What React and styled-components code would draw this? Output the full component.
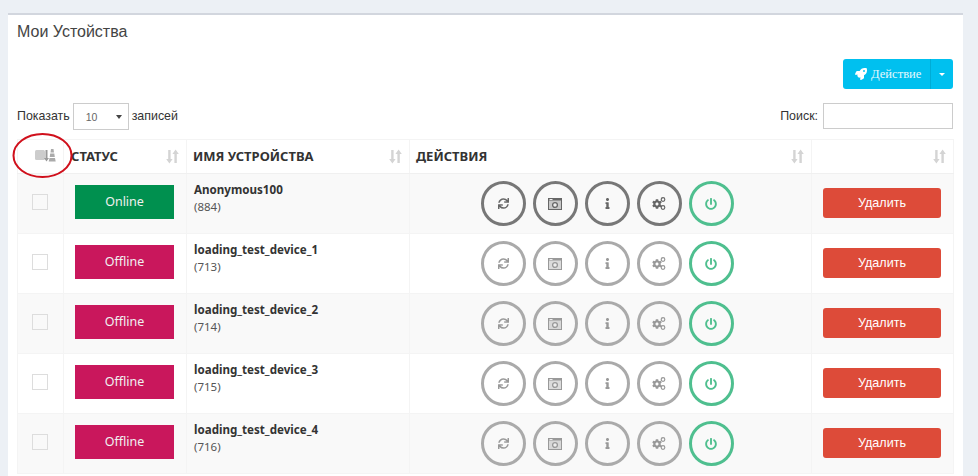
import styled, { createGlobalStyle } from "styled-components";
import { FaSync, FaInfo, FaPowerOff, FaRocket, FaCog } from "react-icons/fa";

const GlobalStyle = createGlobalStyle`
  html, body {
    margin: 0;
    padding: 0;
    height: 476px;
    overflow: hidden;
    background: #ecf0f5;
    font-family: "Liberation Sans", Arial, sans-serif;
  }
`;

const Page = styled.div`
  position: relative;
  height: 476px;
  padding: 13px 15px 0 8px;
  box-sizing: border-box;
`;

const Card = styled.section`
  height: 463px;
  box-sizing: border-box;
  background: #fff;
  border-top: 2px solid #d2d6de;
  padding: 0 10px 0 9px;
  overflow: hidden;
`;

const Title = styled.h3`
  margin: 0;
  padding-top: 7px;
  height: 44px;
  box-sizing: border-box;
  font-size: 16px;
  line-height: 20px;
  font-weight: 400;
  color: #444;
`;

const Toolbar = styled.div`
  display: flex;
  justify-content: flex-end;
  height: 44px;
`;

const ActionGroup = styled.div`
  display: flex;
  height: 30px;
  border-radius: 3px;
  overflow: hidden;
  background: #00c0ef;
  color: #fff;
`;

const ActionMain = styled.button`
  display: flex;
  align-items: center;
  gap: 4px;
  width: 88px;
  padding: 0 0 0 12px;
  border: 0;
  border-right: 1px solid #00acd6;
  background: none;
  color: #e4f8fd;
  font-family: "Liberation Serif", serif;
  font-size: 12.6px;
`;

const ActionCaret = styled.button`
  display: flex;
  align-items: center;
  justify-content: center;
  width: 22px;
  padding: 0;
  border: 0;
  background: none;
  &::after {
    content: "";
    border-left: 3px solid transparent;
    border-right: 3px solid transparent;
    border-top: 3px solid #fff;
  }
`;

const Controls = styled.div`
  display: flex;
  justify-content: space-between;
  height: 36px;
  font-size: 12.4px;
  color: #333;
`;

const ControlGroup = styled.label`
  display: flex;
  align-items: flex-start;
  gap: 3px;
  line-height: 26px;
`;

const FakeSelect = styled.div`
  display: flex;
  align-items: center;
  justify-content: space-between;
  width: 56px;
  height: 27px;
  box-sizing: border-box;
  border: 1px solid #ccc;
  padding: 0 6px 0 12px;
  font-size: 10.5px;
  color: #666;
  &::after {
    content: "";
    border-left: 3px solid transparent;
    border-right: 3px solid transparent;
    border-top: 4px solid #444;
  }
`;

const SearchInput = styled.input`
  width: 130px;
  height: 26px;
  box-sizing: border-box;
  border: 1px solid #ccc;
  margin-left: 2px;
  outline: none;
`;

const Table = styled.table`
  width: 936px;
  table-layout: fixed;
  border-collapse: collapse;
  border: 1px solid #f4f4f4;
`;

const HeadCell = styled.th`
  position: relative;
  height: 34px;
  padding: 0 0 2px ${(p) => p.$pad ?? 6}px;
  box-sizing: border-box;
  border: 1px solid #f4f4f4;
  border-bottom: 1px solid #f0f0f0;
  text-align: left;
  font-family: "Noto Sans", sans-serif;
  font-size: 13px;
  font-weight: 700;
  color: #333;
`;

const SortMark = styled.svg`
  position: absolute;
  right: 7px;
  top: 9px;
  width: 13px;
  height: 15px;
  color: #d4d4d4;
`;

const Row = styled.tr`
  background: ${(p) => (p.$striped ? "#f9f9f9" : "#fff")};
`;

const Cell = styled.td`
  height: 60px;
  padding: 0;
  box-sizing: border-box;
  border: 1px solid #f4f4f4;
  vertical-align: middle;
`;

const Check = styled.span`
  display: block;
  width: 16px;
  height: 16px;
  margin: 0 0 4px 14px;
  box-sizing: border-box;
  border: 1px solid #ddd;
  background: ${(p) => (p.$striped ? "#f9f9f9" : "#fff")};
`;

const StatusLabel = styled.div`
  display: flex;
  align-items: center;
  justify-content: center;
  width: 99px;
  height: 34px;
  margin: -4px 0 0 11px;
  background: ${(p) => (p.$online ? "#00904f" : "#c9175c")};
  color: #f0f0f0;
  font-family: "Noto Sans", sans-serif;
  font-size: 12.5px;
`;

const DeviceName = styled.div`
  margin: -11px 0 0 7px;
  font-family: "Noto Sans", sans-serif;
  font-size: 11.6px;
  line-height: 17px;
  font-weight: 700;
  color: #333;
`;

const DeviceId = styled.div`
  margin: 0 0 0 7px;
  font-family: "Noto Sans", sans-serif;
  font-size: 11.5px;
  line-height: 17px;
  color: #555;
`;

const ActionList = styled.div`
  display: flex;
  justify-content: center;
  gap: 7px;
  margin-right: 7px;
`;

const RoundButton = styled.button`
  display: flex;
  align-items: center;
  justify-content: center;
  width: 45px;
  height: 45px;
  padding: 0;
  box-sizing: border-box;
  background: none;
  border: 3px solid ${(p) => p.$color};
  border-radius: 50%;
  color: ${(p) => p.$icon};
  font-size: ${(p) => p.$size ?? 12}px;
`;

const DeleteButton = styled.button`
  display: block;
  width: 118px;
  height: 30px;
  margin: -2px 0 0 11px;
  padding: 0;
  border: 0;
  border-radius: 3px;
  background: #dd4b39;
  color: #fff;
  font-family: "Liberation Sans", sans-serif;
  font-size: 12.6px;
`;

const Annotation = styled.svg`
  position: absolute;
  left: 12px;
  top: 132px;
  width: 62px;
  height: 48px;
  overflow: visible;
`;

const SelectAllIcon = styled.svg`
  display: block;
  width: 21px;
  height: 13px;
  margin: 0 0 0 17px;
`;

const SortIcon = () => (
  <SortMark viewBox="0 0 13 15" fill="currentColor">
    <path d="M2.200 1h2.400v9h2L3.400 14.500.2 10h2z" />
    <path d="M8.400 14h2.400V5h2L9.600.5 6.400 5h2z" />
  </SortMark>
);

const CaptureIcon = ({ color }) => (
  <svg width="14" height="12" viewBox="0 0 14 12">
    <rect x="0.500" y="0.500" width="13" height="11" fill={color} fillOpacity="0.35" stroke={color} />
    <rect x="0.500" y="0.500" width="13" height="2" fill={color} />
    <rect x="1.500" y="1" width="3" height="1" fill="#eee" />
    <circle cx="7" cy="7" r="2.400" fill="#eee" stroke={color} strokeWidth="1.300" />
  </svg>
);

const GearsIcon = ({ color }) => (
  <svg width="14" height="13" viewBox="0 0 14 13" fill="none" stroke={color}>
    <FaCog x="0" y="2" size={10} color={color} stroke="none" />
    <circle cx="11" cy="2.500" r="1.800" strokeWidth="1.200" />
    <circle cx="11" cy="10.500" r="1.800" strokeWidth="1.200" />
  </svg>
);

const devices = [
  { name: "Anonymous100", id: 884, online: true },
  { name: "loading_test_device_1", id: 713 },
  { name: "loading_test_device_2", id: 714 },
  { name: "loading_test_device_3", id: 715 },
  { name: "loading_test_device_4", id: 716 },
];

function DeviceRow({ device, striped }) {
  const ring = device.online ? "#777" : "#aaa";
  const glyph = device.online ? "#666" : "#999";
  return (
    <Row $striped={striped}>
      <Cell>
        <Check $striped={striped} />
      </Cell>
      <Cell>
        <StatusLabel $online={device.online}>
          {device.online ? "Online" : "Offline"}
        </StatusLabel>
      </Cell>
      <Cell>
        <DeviceName>{device.name}</DeviceName>
        <DeviceId>({device.id})</DeviceId>
      </Cell>
      <Cell>
        <ActionList>
          <RoundButton $color={ring} $icon={glyph} $size={11}>
            <FaSync />
          </RoundButton>
          <RoundButton $color={ring} $icon={glyph}>
            <CaptureIcon color={glyph} />
          </RoundButton>
          <RoundButton $color={ring} $icon={glyph} $size={11}>
            <FaInfo />
          </RoundButton>
          <RoundButton $color={ring} $icon={glyph}>
            <GearsIcon color={glyph} />
          </RoundButton>
          <RoundButton $color="#4fbf8f" $icon="#4fbf8f">
            <FaPowerOff />
          </RoundButton>
        </ActionList>
      </Cell>
      <Cell>
        <DeleteButton>Удалить</DeleteButton>
      </Cell>
    </Row>
  );
}

export default function App() {
  return (
    <Page>
      <GlobalStyle />
      <Card>
        <Title>Мои Устойства</Title>
        <Toolbar>
          <ActionGroup>
            <ActionMain>
              <FaRocket size={12} color="#fff" />
              Действие
            </ActionMain>
            <ActionCaret />
          </ActionGroup>
        </Toolbar>
        <Controls>
          <ControlGroup>
            Показать <FakeSelect>10</FakeSelect> записей
          </ControlGroup>
          <ControlGroup>
            Поиск: <SearchInput />
          </ControlGroup>
        </Controls>
        <Table>
          <colgroup>
            <col style={{ width: 46 }} />
            <col style={{ width: 123 }} />
            <col style={{ width: 223 }} />
            <col style={{ width: 402 }} />
            <col style={{ width: 142 }} />
          </colgroup>
          <thead>
            <tr>
              <HeadCell $pad={0}>
                <SelectAllIcon viewBox="0 0 21 13">
                  <rect x="0" y="1" width="10" height="10" rx="1.500" fill="#ccc" />
                  <path d="M10.500 1h2v8h1.500l-2.500 3.500L9 9h1.500z" fill="#999" />
                  <path d="M16 0h2.500l.5 3.500h-3.500zM15.200 4.500h4.100l.5 3.500h-5.100zM14.500 9h5.500l.7 3.500h-7z" fill="#aaa" />
                </SelectAllIcon>
              </HeadCell>
              <HeadCell $pad={7}>
                СТАТУС
                <SortIcon />
              </HeadCell>
              <HeadCell>
                ИМЯ УСТРОЙСТВА
                <SortIcon />
              </HeadCell>
              <HeadCell>
                ДЕЙСТВИЯ
                <SortIcon />
              </HeadCell>
              <HeadCell>
                <SortIcon />
              </HeadCell>
            </tr>
          </thead>
          <tbody>
            {devices.map((device, i) => (
              <DeviceRow key={device.id} device={device} striped={i % 2 === 0} />
            ))}
          </tbody>
        </Table>
      </Card>
      <Annotation viewBox="0 0 62 48">
        <ellipse cx="30.500" cy="23.500" rx="29" ry="21.500" fill="none" stroke="#d0101c" strokeWidth="2" />
      </Annotation>
    </Page>
  );
}
